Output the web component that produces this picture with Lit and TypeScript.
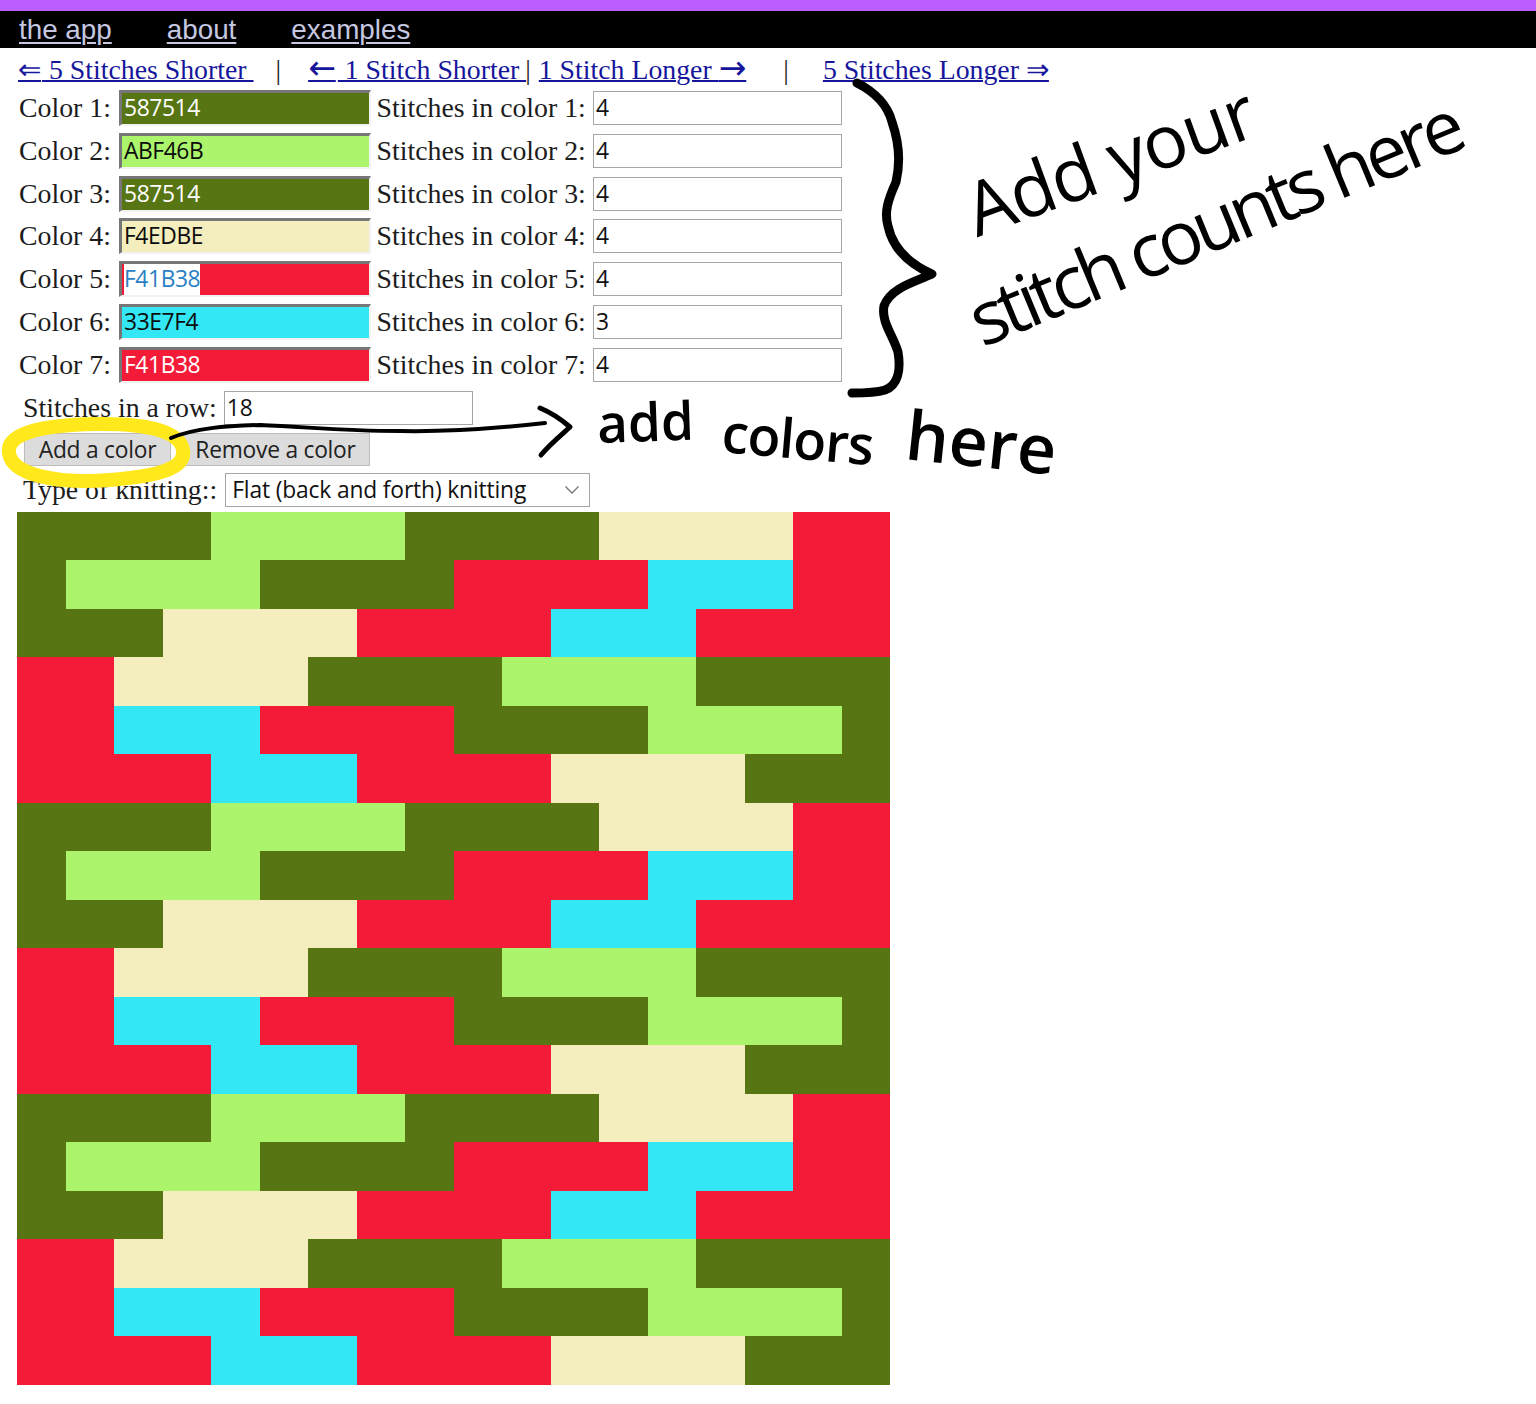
import { LitElement, html, css, svg } from "lit";
import { customElement } from "lit/decorators.js";

const COLORS = [
  { hex: "587514", n: 4, light: true },
  { hex: "ABF46B", n: 4, light: false },
  { hex: "587514", n: 4, light: true },
  { hex: "F4EDBE", n: 4, light: false },
  { hex: "F41B38", n: 4, light: false, selected: true },
  { hex: "33E7F4", n: 3, light: false },
  { hex: "F41B38", n: 4, light: true },
];
const COLS = 18;
const ROWS = 18;

function buildCells(): string[] {
  const seq: string[] = [];
  for (const c of COLORS) for (let i = 0; i < c.n; i++) seq.push(c.hex);
  const cells: string[] = [];
  for (let r = 0; r < ROWS; r++) {
    const row: string[] = [];
    for (let c = 0; c < COLS; c++) row.push(seq[(r * COLS + c) % seq.length]);
    if (r % 2) row.reverse();
    cells.push(...row);
  }
  return cells;
}

@customElement("app-root")
export class AppRoot extends LitElement {
  static styles = css`
    :host {
      display: block;
      position: relative;
      min-height: 1404px;
      background: #fff;
      font-family: "Liberation Serif", serif;
      font-size: 27.8px;
      color: #1c1c1c;
      overflow: hidden;
    }
    .topbar { height: 11px; background: #bd5fff; }
    .nav {
      height: 37px;
      background: #000;
      display: flex;
      align-items: center;
      gap: 55px;
      padding-left: 19px;
      font-family: "Liberation Sans", sans-serif;
    }
    .nav a { color: #c5c8e0; text-decoration: underline; text-underline-offset: 3px; text-decoration-thickness: 1.5px; }
    .steps { height: 43px; display: flex; align-items: center; padding-left: 18px; white-space: pre; }
    .steps a { color: #16169c; text-decoration: underline; text-decoration-thickness: 1.5px; }
    .arrow { font-family: "DejaVu Sans", sans-serif; font-size: 33px; line-height: 0; }
    .arrow.gap { padding-right: 2px; }
    .darrow { margin-right: 1px; }
    .sep { color: #222; }
    .sep-a { margin: 0 27px 0 22px; }
    .sep-b { margin: 0 8px 0 -1px; }
    .sep-c { margin: 0 34px 0 37px; }
    .rows { display: flex; flex-direction: column; gap: 8.8px; }
    .row { height: 34px; display: flex; align-items: center; padding-left: 19px; white-space: nowrap; }
    .row .lbl { width: 100px; }
    .swatch {
      box-sizing: border-box;
      width: 252px;
      height: 36px;
      border-style: solid;
      border-width: 3px 2px 2px 3px;
      border-color: #77777a #f2f2f2 #f2f2f2 #77777a;
      font-family: "Open Sans", sans-serif;
      font-size: 22.8px;
      letter-spacing: -0.4px;
      line-height: 29px;
      padding-left: 2px;
      color: #0c0c0c;
    }
    .swatch.light { color: #fff; }
    .swatch .sel { background: #fff; color: #2a80c4; display: inline-block; height: 31px; }
    .row .lbl2 { width: 216.4px; margin-left: 5.6px; }
    input.field, select.field {
      box-sizing: border-box;
      height: 34px;
      border: 1.5px solid #a6a6a6;
      border-radius: 0;
      background: #fff;
      font-family: "Open Sans", sans-serif;
      font-size: 22.8px;
      letter-spacing: -0.15px;
      color: #111;
      padding: 0 2px 1px;
      margin: 0;
      outline: none;
    }
    .count { width: 249px; }
    .stitches { display: flex; align-items: center; height: 34px; padding-left: 23px; margin-top: 9px; white-space: nowrap; }
    .stitches input { width: 249px; margin-left: 7px; }
    .buttons { display: flex; gap: 7px; padding-left: 24px; margin-top: 8px; }
    button {
      box-sizing: border-box;
      height: 33px;
      border: 1.5px solid #bdbdbd;
      border-radius: 0;
      background: #dcdcdc;
      color: #222;
      font-family: "Open Sans", sans-serif;
      font-size: 22.8px;
      letter-spacing: -0.25px;
      padding: 0 0 2px;
      margin: 0;
    }
    .add { width: 147px; }
    .remove { width: 192px; padding-left: 3px; }
    .knit { display: flex; align-items: center; height: 34px; padding-left: 23px; margin-top: 7px; white-space: nowrap; }
    .selwrap { position: relative; margin-left: 8px; width: 365px; height: 34px; }
    .selwrap select { width: 100%; appearance: none; -webkit-appearance: none; padding-left: 6px; }
    .chev { position: absolute; right: 10px; top: 12px; width: 16px; height: 10px; pointer-events: none; }
    .pattern {
      display: grid;
      grid-template-columns: repeat(18, 48.5px);
      grid-auto-rows: 48.5px;
      margin: 5px 0 0 17px;
      width: 873px;
    }
    .marks { position: absolute; left: 0; top: 0; width: 1536px; height: 1404px; pointer-events: none; }
    .hand {
      position: absolute;
      font-family: "Open Sans", sans-serif;
      font-weight: 500;
      color: #000;
      white-space: nowrap;
      line-height: 1;
      transform-origin: 0 100%;
    }
    .bold { font-weight: 600; }
    .h1 { left: 980px; top: 172px; font-size: 74px; letter-spacing: -1.5px; transform: rotate(-20deg); }
    .h2 { left: 986px; top: 282px; font-size: 74px; letter-spacing: -5.2px; transform: rotate(-22.5deg); }
    .h3 { left: 598px; top: 396px; font-size: 53px; letter-spacing: 0; transform: rotate(-2deg); }
    .h4 { left: 720px; top: 404px; font-size: 54px; letter-spacing: -1px; transform: rotate(5deg); }
    .h5 { left: 903px; top: 399px; font-size: 68px; letter-spacing: 0; transform: rotate(6deg); }
  `;

  private marks() {
    return svg`
      <path d="M9 453 C6 434 40 425 95 424 C150 423 180 432 183 450 C186 468 160 476 110 480 C60 484 12 476 9 453 Z"
        fill="none" stroke="#ffe81c" stroke-width="14" stroke-linecap="round"/>
      <path d="M171 438 C195 428 225 426 260 425 C310 427 340 431 400 431 C450 432 500 428 545 423"
        fill="none" stroke="#000" stroke-width="4" stroke-linecap="round"/>
      <path d="M540 408 C552 413 562 420 570 427 C560 436 549 445 541 455"
        fill="none" stroke="#000" stroke-width="5" stroke-linecap="round" stroke-linejoin="round"/>
      <path d="M857 83 C875 92 888 106 892 122 C900 145 900 165 896 182 C888 200 884 212 888 226 C892 245 905 262 932 274 C915 282 890 288 884 306 C881 322 893 335 898 352 C901 370 898 385 885 390 C875 393 862 393 852 393"
        fill="none" stroke="#000" stroke-width="9" stroke-linecap="round" stroke-linejoin="round"/>
    `;
  }

  render() {
    const cells = buildCells();
    return html`
      <div class="topbar"></div>
      <nav class="nav"><a>the app</a><a>about</a><a>examples</a></nav>
      <div class="steps">
        <a><span class="darrow">⇐</span> 5 Stitches Shorter </a><span class="sep sep-a">|</span>
        <a><span class="arrow gap">←</span> 1 Stitch Shorter </a><span class="sep sep-b">|</span>
        <a>1 Stitch Longer <span class="arrow">→</span></a><span class="sep sep-c">|</span>
        <a>5 Stitches Longer ⇒</a>
      </div>
      <div class="rows">
        ${COLORS.map(
          (c, i) => html`
            <div class="row">
              <span class="lbl">Color ${i + 1}:</span>
              <div class="swatch ${c.light ? "light" : ""}" style="background:#${c.hex}">
                ${c.selected ? html`<span class="sel">${c.hex}</span>` : c.hex}
              </div>
              <span class="lbl2">Stitches in color ${i + 1}:</span>
              <input class="field count" .value=${String(c.n)} />
            </div>
          `
        )}
      </div>
      <div class="stitches">Stitches in a row:<input class="field" value="18" /></div>
      <div class="buttons">
        <button class="add">Add a color</button>
        <button class="remove">Remove a color</button>
      </div>
      <div class="knit">
        Type of knitting::
        <div class="selwrap">
          <select class="field"><option>Flat (back and forth) knitting</option></select>
          <svg class="chev" viewBox="0 0 16 10"><path d="M1.5 1.5 L8 8 L14.5 1.5" fill="none" stroke="#777" stroke-width="1.4"/></svg>
        </div>
      </div>
      <div class="pattern">
        ${cells.map((c) => html`<div style="background:#${c}"></div>`)}
      </div>
      <svg class="marks" viewBox="0 0 1536 1404">${this.marks()}</svg>
      <span class="hand h1">Add your</span>
      <span class="hand h2">stitch counts here</span>
      <span class="hand bold h3">add</span>
      <span class="hand bold h4">colors</span>
      <span class="hand bold h5">here</span>
    `;
  }
}
